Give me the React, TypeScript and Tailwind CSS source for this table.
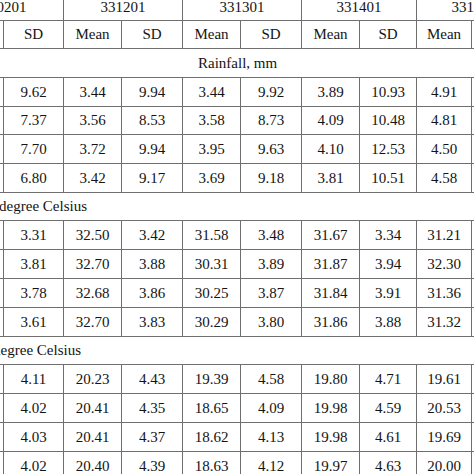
import React from 'react';

// visible slice of a wide stats table; first column sits mostly off the left edge
const gridCols = 'grid grid-cols-[59px_60px_58px_61px_58px_61px_58px_57px_55px_60px]';

const stations = ['330201', '331201', '331301', '331401', '331501'];
const subHeads = ['Mean', 'SD', 'Mean', 'SD', 'Mean', 'SD', 'Mean', 'SD', 'Mean', 'SD'];

interface Section {
  label: string;
  labelClass: string;
  rows: string[][];
}

const sections: Section[] = [
  {
    label: 'Rainfall, mm',
    labelClass: 'pl-[254px]',
    rows: [
      ['3.21', '9.62', '3.44', '9.94', '3.44', '9.92', '3.89', '10.93', '4.91', '11.02'],
      ['3.30', '7.37', '3.56', '8.53', '3.58', '8.73', '4.09', '10.48', '4.81', '9.87'],
      ['3.41', '7.70', '3.72', '9.94', '3.95', '9.63', '4.10', '12.53', '4.50', '10.20'],
      ['3.18', '6.80', '3.42', '9.17', '3.69', '9.18', '3.81', '10.51', '4.58', '9.66'],
    ],
  },
  {
    label: 'Maximum temperature, degree Celsius',
    labelClass: 'w-[143px] justify-end',
    rows: [
      ['32.41', '3.31', '32.50', '3.42', '31.58', '3.48', '31.67', '3.34', '31.21', '3.40'],
      ['32.62', '3.81', '32.70', '3.88', '30.31', '3.89', '31.87', '3.94', '32.30', '3.92'],
      ['32.60', '3.78', '32.68', '3.86', '30.25', '3.87', '31.84', '3.91', '31.36', '3.90'],
      ['32.61', '3.61', '32.70', '3.83', '30.29', '3.80', '31.86', '3.88', '31.32', '3.85'],
    ],
  },
  {
    label: 'Minimum temperature, degree Celsius',
    labelClass: 'w-[137px] justify-end',
    rows: [
      ['20.11', '4.11', '20.23', '4.43', '19.39', '4.58', '19.80', '4.71', '19.61', '4.66'],
      ['20.30', '4.02', '20.41', '4.35', '18.65', '4.09', '19.98', '4.59', '20.53', '4.55'],
      ['20.32', '4.03', '20.41', '4.37', '18.62', '4.13', '19.98', '4.61', '19.69', '4.57'],
      ['20.31', '4.02', '20.40', '4.39', '18.63', '4.12', '19.97', '4.63', '20.00', '4.60'],
    ],
  },
];

// line spacing in the source isn't perfectly even
const rowHeights = [
  ['h-[29px]', 'h-[28px]', 'h-[29px]', 'h-[29px]'],
  ['h-[29px]', 'h-[29px]', 'h-[29px]', 'h-[29px]'],
  ['h-[29px]', 'h-[29px]', 'h-[29px]', 'h-[29px]'],
];
const labelHeights = ['h-[29px]', 'h-[28px]', 'h-[28px]'];

const Cell: React.FC<{ children: React.ReactNode; className?: string }> = ({ children, className = '' }) => (
  <div className={`flex items-center justify-center border-l border-[#6f6f6f] ${className}`}>{children}</div>
);

const App: React.FC = () => {
  return (
    <div
      className="h-[474px] w-[474px] overflow-hidden bg-white text-[15px] leading-none text-[#141414]"
      style={{ fontFamily: '"Liberation Serif", "Times New Roman", serif' }}
    >
      <div className="ml-[-56px] mt-[-9px] w-[700px]">
        {/* station ids */}
        <div className={`${gridCols} h-[29px]`}>
          {stations.map((s) => (
            <Cell key={s} className="col-span-2">
              <span className="pt-[3px]">{s}</span>
            </Cell>
          ))}
        </div>

        {/* mean / sd */}
        <div className={`${gridCols} h-[28px] border-t border-[#6f6f6f]`}>
          {subHeads.map((h, i) => (
            <Cell key={i}>{h}</Cell>
          ))}
        </div>

        {sections.map((sec, si) => (
          <div key={sec.label}>
            <div className={`${labelHeights[si]} border-t border-[#6f6f6f]`}>
              <div className={`flex h-full items-center whitespace-nowrap ${sec.labelClass}`}>
                <span className="shrink-0">{sec.label}</span>
              </div>
            </div>
            {sec.rows.map((row, ri) => (
              <div key={ri} className={`${gridCols} ${rowHeights[si][ri]} border-t border-[#6f6f6f]`}>
                {row.map((v, ci) => (
                  <Cell key={ci}>{v}</Cell>
                ))}
              </div>
            ))}
          </div>
        ))}
      </div>
    </div>
  );
};

export default App;
